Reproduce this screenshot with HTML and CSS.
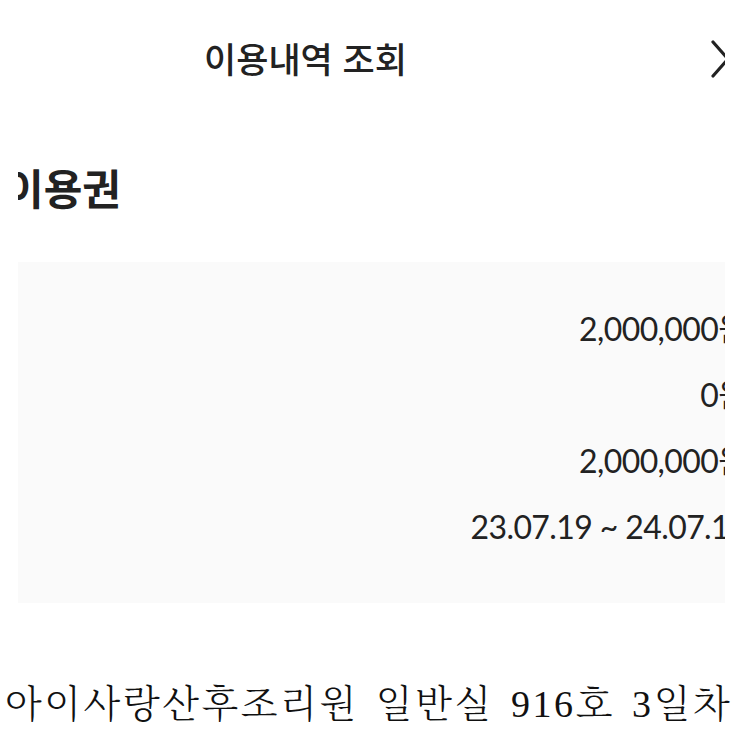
FILE: index.html
```html
<!DOCTYPE html>
<html lang="ko">
<head>
<meta charset="utf-8">
<link rel="stylesheet" href="styles.css">
</head>
<body>
<div class="clip">
  <header class="topbar">
    <span class="topbar-title">이용내역 조회</span>
    <svg class="chevron" width="20" height="40" viewBox="0 0 20 40"><polyline points="2,3 17,20 2,37" fill="none" stroke="#222" stroke-width="3.2" stroke-linecap="round" stroke-linejoin="round"/></svg>
  </header>
  <h2 class="section-title">이용권</h2>
  <div class="ticket">
    <div class="row">2,000,000원</div>
    <div class="row">0원</div>
    <div class="row">2,000,000원</div>
    <div class="row">23.07.19 ~ 24.07.18</div>
  </div>
</div>
<p class="caption">아이사랑산후조리원 일반실 916호 3일차</p>
</body>
</html>
```
FILE: styles.css
```css
html, body {
  margin: 0;
  padding: 0;
  background: #ffffff;
}
body {
  width: 743px;
  height: 743px;
  overflow: hidden;
  font-family: "Noto Sans CJK KR", sans-serif;
  color: #222222;
}
.clip {
  margin-left: 18px;
  width: 707px;
  overflow: hidden;
}
.topbar {
  height: 118px;
  display: flex;
  align-items: center;
  justify-content: space-between;
  padding-left: 186px;
}
.topbar-title {
  font-size: 35px;
  font-weight: 500;
  line-height: 41px;
  margin-top: -4px;
  color: #222222;
}
.chevron {
  display: block;
  margin-right: -6px;
}
.section-title {
  margin: 44px 0 50px -13px;
  font-size: 42px;
  font-weight: 700;
  line-height: 50px;
  color: #222222;
}
.ticket {
  background: #fafafa;
  margin-right: -49px;
  padding: 34px 27px 43px 0;
}
.row {
  font-family: Lato, "Noto Sans CJK KR", sans-serif;
  font-size: 32px;
  line-height: 66px;
  letter-spacing: -0.6px;
  text-align: right;
  color: #222222;
  white-space: nowrap;
}
.caption {
  margin: 78px 0 0 0;
  padding-left: 5px;
  font-family: "Liberation Serif", "Noto Serif CJK KR", "Noto Sans CJK KR", serif;
  font-size: 38px;
  font-weight: 300;
  line-height: 46px;
  letter-spacing: 2.6px;
  word-spacing: 5px;
  color: #111111;
  white-space: nowrap;
}
```
